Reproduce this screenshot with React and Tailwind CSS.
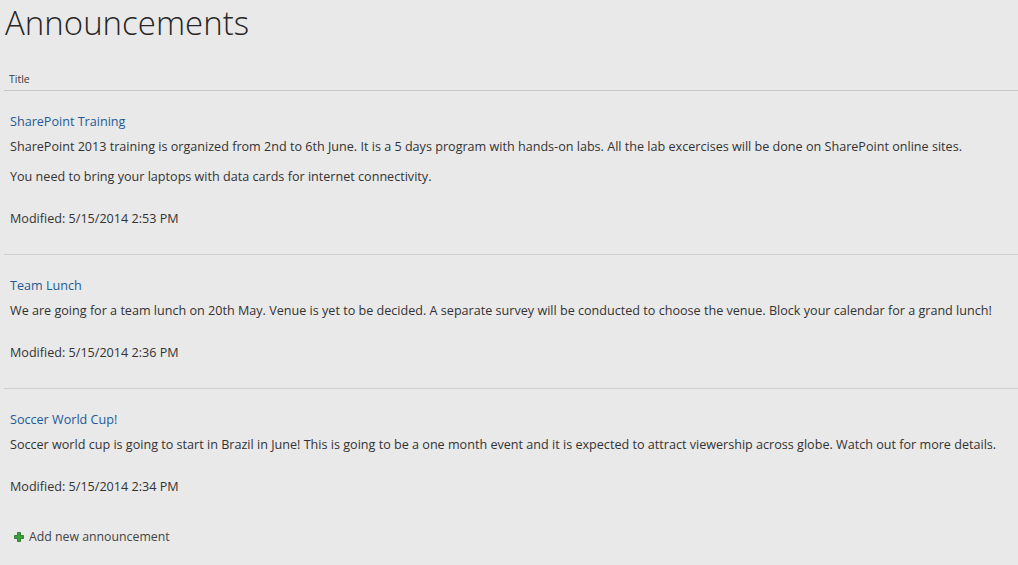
const items = [
  {
    title: 'SharePoint Training',
    body: [
      'SharePoint 2013 training is organized from 2nd to 6th June. It is a 5 days program with hands-on labs. All the lab excercises will be done on SharePoint online sites.',
      'You need to bring your laptops with data cards for internet connectivity.',
    ],
    modified: '5/15/2014 2:53 PM',
  },
  {
    title: 'Team Lunch',
    body: [
      'We are going for a team lunch on 20th May. Venue is yet to be decided. A separate survey will be conducted to choose the venue. Block your calendar for a grand lunch!',
    ],
    modified: '5/15/2014 2:36 PM',
  },
  {
    title: 'Soccer World Cup!',
    body: [
      'Soccer world cup is going to start in Brazil in June! This is going to be a one month event and it is expected to attract viewership across globe. Watch out for more details.',
    ],
    modified: '5/15/2014 2:34 PM',
  },
];

const PlusIcon = () => (
  <svg width="10" height="10" viewBox="0 0 10 10" className="shrink-0">
    <path d="M3.5 0.5h3v3h3v3h-3v3h-3v-3h-3v-3h3z" fill="#3aa13a" stroke="#1f6e1f" strokeWidth="0.8" />
  </svg>
);

export default function App() {
  return (
    <div className="min-h-screen bg-[#e9e9e9] text-[#333] font-['Open_Sans',sans-serif] pl-1 overflow-hidden">
      <h1 className="text-[33px] font-light leading-[46px] text-[#262626] pl-px whitespace-nowrap">Announcements</h1>

      <div className="mt-[25px] border-b border-[#c8c8c8] pl-[5px] pb-[3px]">
        <span className="text-[10.5px] leading-4 text-[#3a3a3a] block">Title</span>
      </div>

      {items.map((item, i) => (
        <div
          key={item.title}
          className={`pl-[6px] pt-[21px] pb-[25px] ${i < items.length - 1 ? 'border-b border-[#cfcfcf]' : ''}`}
        >
          <div className="text-[12.6px] leading-5 text-[#1e5a96]">{item.title}</div>
          <div className="mt-[5px] flex flex-col gap-[10px]">
            {item.body.map((p) => (
              <p key={p} className="text-[12.6px] leading-5 whitespace-nowrap">{p}</p>
            ))}
          </div>
          <div className="mt-[22px] text-[12.6px] leading-5">Modified: {item.modified}</div>
        </div>
      ))}

      <div className="mt-[5px] pl-[10px] flex items-center gap-[5px] text-[12.3px] leading-5 text-[#444]">
        <PlusIcon />
        <span>Add new announcement</span>
      </div>
    </div>
  );
}
